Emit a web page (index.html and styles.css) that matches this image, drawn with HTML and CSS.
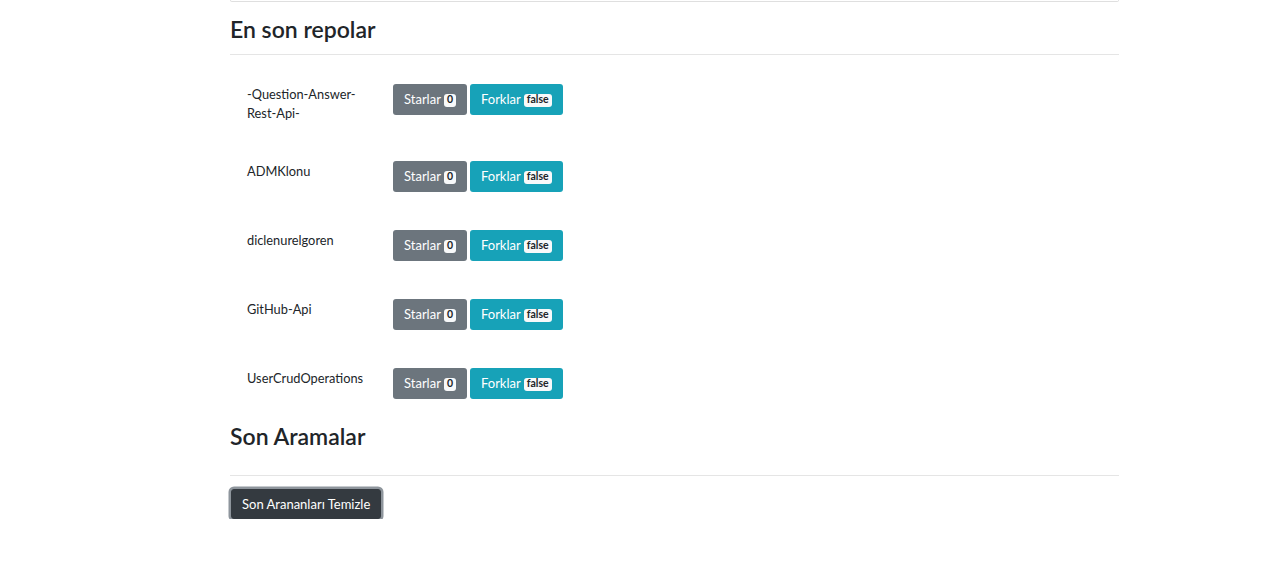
FILE: index.html
```html
<!DOCTYPE html>
<html lang="tr">
<head>
    <meta charset="UTF-8">
    <meta name="viewport" content="width=device-width, initial-scale=1.0">
    <title>GitHub Arama</title>
    <link rel="stylesheet" href="styles.css">
</head>
<body>
    <div class="page">
        <div class="card-end"></div>

        <h4 class="section-title">En son repolar</h4>
        <hr class="divider">

        <div class="repo-list">
            <div class="repo">
                <div class="repo-name">-Question-Answer-Rest-Api-</div>
                <div class="repo-actions">
                    <span class="btn btn-secondary">Starlar <span class="badge">0</span></span>
                    <span class="btn btn-info">Forklar <span class="badge">false</span></span>
                </div>
            </div>
            <div class="repo">
                <div class="repo-name">ADMKlonu</div>
                <div class="repo-actions">
                    <span class="btn btn-secondary">Starlar <span class="badge">0</span></span>
                    <span class="btn btn-info">Forklar <span class="badge">false</span></span>
                </div>
            </div>
            <div class="repo">
                <div class="repo-name">diclenurelgoren</div>
                <div class="repo-actions">
                    <span class="btn btn-secondary">Starlar <span class="badge">0</span></span>
                    <span class="btn btn-info">Forklar <span class="badge">false</span></span>
                </div>
            </div>
            <div class="repo">
                <div class="repo-name">GitHub-Api</div>
                <div class="repo-actions">
                    <span class="btn btn-secondary">Starlar <span class="badge">0</span></span>
                    <span class="btn btn-info">Forklar <span class="badge">false</span></span>
                </div>
            </div>
            <div class="repo">
                <div class="repo-name">UserCrudOperations</div>
                <div class="repo-actions">
                    <span class="btn btn-secondary">Starlar <span class="badge">0</span></span>
                    <span class="btn btn-info">Forklar <span class="badge">false</span></span>
                </div>
            </div>
        </div>

        <h4 class="section-title section-title--searches">Son Aramalar</h4>
        <div class="search-list"></div>
        <hr class="divider">

        <button class="btn btn-dark" id="clearSearches">Son Arananları Temizle</button>
    </div>
</body>
</html>
```

FILE: styles.css
```css
* {
    box-sizing: border-box;
}

body {
    margin: 0;
    background: #fff;
    color: #212529;
    font-family: Lato, "Noto Sans", Arial, sans-serif;
    font-size: 12.8px;
    line-height: 1.5;
}

.page {
    width: 889px;
    margin-left: 230px;
}

/* bottom edge of the search card above */
.card-end {
    height: 2px;
    border: 1px solid rgba(0, 0, 0, 0.125);
    border-top: none;
    border-radius: 0 0 4px 4px;
}

.section-title {
    margin: 13px 0 0;
    font-size: 23px;
    font-weight: 600;
    line-height: 28px;
}

.divider {
    margin: 11px 0 0;
    border: 0;
    border-top: 1px solid rgba(0, 0, 0, 0.1);
}

/* Repos */
.repo-list {
    display: flex;
    flex-direction: column;
    gap: 38px;
    margin-top: 29px;
}

.repo {
    display: flex;
    align-items: flex-start;
    padding-left: 17px;
}

.repo-name {
    width: 146px;
    padding-top: 1px;
    padding-right: 16px;
    line-height: 19px;
}

.repo-actions {
    display: flex;
    gap: 3px;
}

.btn {
    display: inline-flex;
    align-items: center;
    height: 31px;
    padding: 1px 10px 0 10px;
    border: 1px solid transparent;
    border-radius: 3px;
    color: #fff;
    font-family: inherit;
    font-size: 13px;
}

.btn-secondary {
    background: #6c757d;
}

.btn-info {
    background: #17a2b8;
}

.badge {
    display: inline-flex;
    align-items: center;
    height: 13px;
    margin-left: 3px;
    padding: 0 3px;
    border-radius: 3px;
    background: #f8f9fa;
    color: #212529;
    font-size: 10.5px;
    font-weight: 700;
}

/* Searches */
.section-title--searches {
    margin-top: 23px;
}

.search-list {
    height: 13.5px;
}

.btn-dark {
    margin-top: 13px;
    margin-left: 1px;
    height: 30px;
    padding: 1px 10px 0 10px;
    background: #343a40;
    border-color: #343a40;
    box-shadow: 0 0 0 2.5px rgba(130, 138, 145, 0.9);
    font-size: 13px;
    cursor: pointer;
}
```
